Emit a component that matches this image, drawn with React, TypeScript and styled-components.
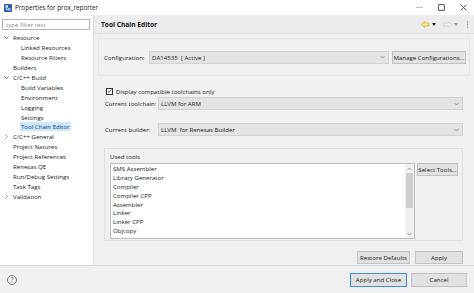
import React from 'react';
import styled, { createGlobalStyle } from 'styled-components';

const GlobalStyle = createGlobalStyle`
  html, body {
    margin: 0;
    padding: 0;
    background: #f0f0f0;
  }
  body {
    font-family: 'Open Sans', 'Noto Sans', sans-serif;
    font-size: 6.1px;
    color: #1a1a1a;
  }
  * {
    box-sizing: border-box;
  }
`;

const Window = styled.div`
  width: 474px;
  height: 293px;
  display: flex;
  flex-direction: column;
  background: #f0f0f0;
  overflow: hidden;
`;

// title bar
const TitleBar = styled.div`
  height: 15px;
  background: #fff;
  display: flex;
  align-items: center;
  padding-left: 4px;
`;
const Title = styled.span`
  margin-left: 3px;
  font-size: 6.3px;
`;
const WinControls = styled.div`
  margin-left: auto;
  display: flex;
  height: 100%;
`;
const WinButton = styled.div`
  width: 22px;
  display: flex;
  align-items: center;
  justify-content: center;
`;

// main
const Main = styled.div`
  height: 250px;
  display: flex;
`;

const Sidebar = styled.div`
  width: 96px;
  background: #fff;
  border-right: 1px solid #dcdcdc;
  padding-top: 4px;
`;
const FilterInput = styled.div`
  margin-left: 2px;
  width: 88px;
  height: 11px;
  border: 1px solid #b4b4b4;
  color: #8a8a8a;
  padding-left: 3px;
  display: flex;
  align-items: center;
`;
const Tree = styled.div`
  margin-top: 3px;
`;
const TreeRow = styled.div<{ $level: number }>`
  height: 9.9px;
  display: flex;
  align-items: center;
  padding-left: ${(p) => (p.$level === 0 ? 4 : 20)}px;
`;
const Twisty = styled.span`
  width: 8px;
  display: flex;
  align-items: center;
`;
const TreeLabel = styled.span<{ $selected?: boolean }>`
  padding: 0 1px;
  line-height: 9px;
  background: ${(p) => (p.$selected ? '#cce8ff' : 'transparent')};
  color: ${(p) => (p.$selected ? '#1a3a66' : 'inherit')};
`;

const Content = styled.div`
  flex: 1;
  display: flex;
  flex-direction: column;
`;
const PageHeader = styled.div`
  height: 19px;
  background: #ececec;
  border-bottom: 1px solid #dedede;
  display: flex;
  align-items: center;
  padding-left: 7px;
  padding-right: 5px;
`;
const PageTitle = styled.span`
  font-weight: 700;
  font-size: 6.6px;
  color: #111;
`;
const NavIcons = styled.div`
  margin-left: auto;
  display: flex;
  align-items: center;
  gap: 2px;
`;
const NavSpacer = styled.span<{ $w: number }>`
  width: ${(p) => p.$w}px;
`;

const PageBody = styled.div`
  flex: 1;
  display: flex;
  flex-direction: column;
  padding: 4px 4px 0 4px;
`;
const ConfigBox = styled.div`
  height: 38px;
  border: 1px solid #e4e4e4;
  display: flex;
  align-items: center;
  gap: 3px;
  padding: 0 3px 0 5px;
`;
const FieldRow = styled.div<{ $top: number }>`
  margin-top: ${(p) => p.$top}px;
  height: 13px;
  display: flex;
  align-items: center;
  padding: 0 7px 0 7px;
`;
const FieldLabel = styled.span<{ $width: number }>`
  width: ${(p) => p.$width}px;
  flex-shrink: 0;
`;
const Combo = styled.div<{ $width?: number }>`
  height: 13px;
  flex: ${(p) => (p.$width ? `0 0 ${p.$width}px` : '1')};
  background: #e3e3e3;
  border: 1px solid #d2d2d2;
  display: flex;
  align-items: center;
  padding-left: 2px;
  padding-right: 3px;
`;
const ComboArrow = styled.span`
  margin-left: auto;
  display: flex;
`;
const Button = styled.div<{ $width: number; $primary?: boolean }>`
  width: ${(p) => p.$width}px;
  height: 13px;
  flex-shrink: 0;
  background: #e1e1e1;
  border: 1px solid ${(p) => (p.$primary ? '#3c8fd8' : '#c2c2c2')};
  display: flex;
  align-items: center;
  justify-content: center;
  white-space: nowrap;
`;

const CheckRow = styled.div`
  margin-top: 10px;
  height: 10px;
  display: flex;
  align-items: center;
  padding-left: 8px;
  gap: 3px;
`;
const CheckBox = styled.span`
  width: 7px;
  height: 7px;
  border: 1px solid #333;
  background: #fff;
  display: flex;
  align-items: center;
  justify-content: center;
`;

const ToolsGroup = styled.div`
  margin: 12px 7px 0 6px;
  height: 93px;
  border: 1px solid #e0e0e0;
  padding: 2px 0 0 5px;
`;
const GroupLabel = styled.div`
  height: 10px;
  display: flex;
  align-items: center;
`;
const ToolsRow = styled.div`
  margin-top: 2px;
  display: flex;
  gap: 2px;
`;
const ToolList = styled.div`
  width: 305px;
  height: 76px;
  background: #fff;
  border: 1px solid #bdbdbd;
  display: flex;
  overflow: hidden;
`;
const ListItems = styled.div`
  flex: 1;
  padding: 0 0 0 2px;
`;
const ListItem = styled.div`
  height: 8.9px;
  display: flex;
  align-items: center;
`;
const ScrollBar = styled.div`
  width: 9px;
  background: #f0f0f0;
  display: flex;
  flex-direction: column;
  align-items: center;
`;
const ScrollArrow = styled.div`
  height: 9px;
  display: flex;
  align-items: center;
`;
const ScrollThumb = styled.div`
  width: 7px;
  height: 35px;
  background: #cdcdcd;
`;
const ScrollTrack = styled.div`
  flex: 1;
`;

const ActionRow = styled.div`
  margin-top: 10px;
  display: flex;
  justify-content: flex-end;
  gap: 5px;
  padding-right: 7px;
`;

const Footer = styled.div`
  flex: 1;
  border-top: 1px solid #dadada;
  display: flex;
  align-items: center;
  padding: 0 7px 0 7px;
`;
const HelpIcon = styled.span`
  width: 10px;
  height: 10px;
  border-radius: 50%;
  border: 1px solid #777;
  color: #666;
  font-size: 7px;
  display: flex;
  align-items: center;
  justify-content: center;
  line-height: 1;
`;
const FooterButtons = styled.div`
  margin-left: auto;
  display: flex;
  gap: 4px;
  > div {
    height: 14px;
  }
`;

const Chevron = ({ open }: { open: boolean }) => (
  <svg width="5" height="5" viewBox="0 0 10 10">
    {open ? (
      <polyline points="1,3 5,7 9,3" fill="none" stroke="#555" strokeWidth="1.6" />
    ) : (
      <polyline points="3,1 7,5 3,9" fill="none" stroke="#777" strokeWidth="1.4" />
    )}
  </svg>
);

const SmallArrow = ({ up }: { up?: boolean }) => (
  <svg width="5" height="4" viewBox="0 0 10 8">
    <polyline points={up ? '1,6 5,2 9,6' : '1,2 5,6 9,2'} fill="none" stroke="#777" strokeWidth="1.4" />
  </svg>
);

const treeItems: { label: string; level: number; twisty?: 'open' | 'closed'; selected?: boolean }[] = [
  { label: 'Resource', level: 0, twisty: 'open' },
  { label: 'Linked Resources', level: 1 },
  { label: 'Resource Filters', level: 1 },
  { label: 'Builders', level: 0 },
  { label: 'C/C++ Build', level: 0, twisty: 'open' },
  { label: 'Build Variables', level: 1 },
  { label: 'Environment', level: 1 },
  { label: 'Logging', level: 1 },
  { label: 'Settings', level: 1 },
  { label: 'Tool Chain Editor', level: 1, selected: true },
  { label: 'C/C++ General', level: 0, twisty: 'closed' },
  { label: 'Project Natures', level: 0 },
  { label: 'Project References', level: 0 },
  { label: 'Renesas QE', level: 0 },
  { label: 'Run/Debug Settings', level: 0 },
  { label: 'Task Tags', level: 0 },
  { label: 'Validation', level: 0, twisty: 'closed' },
];

const tools = [
  'SMS Assembler',
  'Library Generator',
  'Compiler',
  'Compiler CPP',
  'Assembler',
  'Linker',
  'Linker CPP',
  'Objcopy',
  'Archiver',
];

const App = () => {
  return (
    <Window>
      <GlobalStyle />
      <TitleBar>
        <svg width="8" height="8" viewBox="0 0 16 16">
          <rect x="0" y="0" width="16" height="16" rx="1.5" fill="#2f62a8" />
          <rect x="3" y="3" width="5" height="4" fill="#fff" />
          <rect x="8" y="8" width="5" height="5" fill="#9cc3ef" />
          <line x1="5" y1="7" x2="5" y2="11" stroke="#fff" strokeWidth="1.5" />
          <line x1="5" y1="11" x2="8" y2="11" stroke="#fff" strokeWidth="1.5" />
        </svg>
        <Title>Properties for prox_reporter</Title>
        <WinControls>
          <WinButton>
            <svg width="7" height="7" viewBox="0 0 10 10">
              <line x1="0" y1="5" x2="10" y2="5" stroke="#888" strokeWidth="0.8" />
            </svg>
          </WinButton>
          <WinButton>
            <svg width="7" height="7" viewBox="0 0 10 10">
              <rect x="1" y="1" width="8" height="8" fill="none" stroke="#333" strokeWidth="1.2" />
            </svg>
          </WinButton>
          <WinButton>
            <svg width="7" height="7" viewBox="0 0 10 10">
              <line x1="1" y1="1" x2="9" y2="9" stroke="#333" strokeWidth="1.1" />
              <line x1="9" y1="1" x2="1" y2="9" stroke="#333" strokeWidth="1.1" />
            </svg>
          </WinButton>
        </WinControls>
      </TitleBar>

      <Main>
        <Sidebar>
          <FilterInput>type filter text</FilterInput>
          <Tree>
            {treeItems.map((item) => (
              <TreeRow key={item.label} $level={item.level}>
                {item.level === 0 && <Twisty>{item.twisty && <Chevron open={item.twisty === 'open'} />}</Twisty>}
                <TreeLabel $selected={item.selected}>{item.label}</TreeLabel>
              </TreeRow>
            ))}
          </Tree>
        </Sidebar>

        <Content>
          <PageHeader>
            <PageTitle>Tool Chain Editor</PageTitle>
            <NavIcons>
              <svg width="9" height="7" viewBox="0 0 18 14">
                <path d="M1 7 L7 1 L7 4 L16 4 L16 10 L7 10 L7 13 Z" fill="#fbe9a0" stroke="#d4a82c" strokeWidth="1.4" />
              </svg>
              <svg width="4" height="3" viewBox="0 0 8 6">
                <path d="M0 0 L8 0 L4 6 Z" fill="#222" />
              </svg>
              <NavSpacer $w={3} />
              <svg width="9" height="7" viewBox="0 0 18 14">
                <path d="M17 7 L11 1 L11 4 L2 4 L2 10 L11 10 L11 13 Z" fill="#f2f2f2" stroke="#c4c4c4" strokeWidth="1.4" />
              </svg>
              <svg width="4" height="3" viewBox="0 0 8 6">
                <path d="M0 0 L8 0 L4 6 Z" fill="#999" />
              </svg>
              <NavSpacer $w={4} />
              <svg width="3" height="9" viewBox="0 0 4 18">
                <rect x="1" y="1" width="2" height="16" fill="#c9c9c9" />
                <circle cx="2" cy="4" r="1" fill="#888" />
                <circle cx="2" cy="9" r="1" fill="#888" />
                <circle cx="2" cy="14" r="1" fill="#888" />
              </svg>
            </NavIcons>
          </PageHeader>

          <PageBody>
            <ConfigBox>
              <FieldLabel $width={42}>Configuration:</FieldLabel>
              <Combo $width={240}>
                DA14535&nbsp; [ Active ]
                <ComboArrow>
                  <SmallArrow />
                </ComboArrow>
              </Combo>
              <Button $width={74}>Manage Configurations...</Button>
            </ConfigBox>

            <CheckRow>
              <CheckBox>
                <svg width="6" height="6" viewBox="0 0 10 10">
                  <polyline points="1.5,5 4,8 8.5,2" fill="none" stroke="#222" strokeWidth="1.3" />
                </svg>
              </CheckBox>
              Display compatible toolchains only
            </CheckRow>
            <FieldRow $top={1}>
              <FieldLabel $width={53}>Current toolchain:</FieldLabel>
              <Combo>
                LLVM for ARM
                <ComboArrow>
                  <SmallArrow />
                </ComboArrow>
              </Combo>
            </FieldRow>
            <FieldRow $top={13}>
              <FieldLabel $width={53}>Current builder:</FieldLabel>
              <Combo>
                LLVM&nbsp; for Renesas Builder
                <ComboArrow>
                  <SmallArrow />
                </ComboArrow>
              </Combo>
            </FieldRow>

            <ToolsGroup>
              <GroupLabel>Used tools</GroupLabel>
              <ToolsRow>
                <ToolList>
                  <ListItems>
                    {tools.map((t) => (
                      <ListItem key={t}>{t}</ListItem>
                    ))}
                  </ListItems>
                  <ScrollBar>
                    <ScrollArrow>
                      <SmallArrow up />
                    </ScrollArrow>
                    <ScrollThumb />
                    <ScrollTrack />
                    <ScrollArrow>
                      <SmallArrow />
                    </ScrollArrow>
                  </ScrollBar>
                </ToolList>
                <Button $width={41}>Select Tools...</Button>
              </ToolsRow>
            </ToolsGroup>

            <ActionRow>
              <Button $width={53}>Restore Defaults</Button>
              <Button $width={48}>Apply</Button>
            </ActionRow>
          </PageBody>
        </Content>
      </Main>

      <Footer>
        <HelpIcon>?</HelpIcon>
        <FooterButtons>
          <Button $width={57} $primary>
            Apply and Close
          </Button>
          <Button $width={56}>Cancel</Button>
        </FooterButtons>
      </Footer>
    </Window>
  );
};

export default App;
